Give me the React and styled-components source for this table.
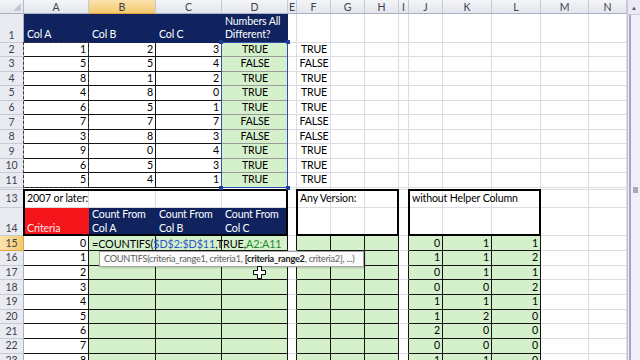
import React from "react";
import styled, { createGlobalStyle } from "styled-components";

const GlobalStyle = createGlobalStyle`
  html, body {
    margin: 0;
    padding: 0;
    background: #ffffff;
  }
  body {
    font-family: Lato, "Liberation Sans", sans-serif;
  }
`;

const GRID = "#dcdde3";
const BLACK = "#141414";
const GRAY = "#9a9a9a";
const NAVY = "#10235f";
const GREEN = "#d4f1cc";
const RED = "#f4151b";

const COLS = ["A", "B", "C", "D", "E", "F", "G", "H", "I", "J", "K", "L", "M", "N"];
const WIDTHS = [65, 67, 66, 66, 9, 34, 34, 34, 10, 34, 49, 49, 48, 38];
const ROW_HEIGHTS = [
  14,
  28.5,
  ...Array(10).fill(14.55),
  2,
  18,
  28.5,
  ...Array(9).fill(14.65),
];

const colA = [1, 5, 8, 4, 6, 7, 3, 9, 6, 5];
const colB = [2, 5, 1, 8, 5, 7, 8, 0, 5, 4];
const colC = [3, 4, 2, 0, 1, 7, 3, 4, 3, 1];
const colD = [true, false, true, true, true, false, false, true, true, true];
const helper = [
  [0, 1, 1],
  [1, 1, 2],
  [0, 1, 1],
  [0, 0, 2],
  [1, 1, 1],
  [1, 2, 0],
  [2, 0, 0],
  [0, 0, 0],
  [1, 1, 0],
];

// what each cell looks like
const cellSpec = (r, c) => {
  const s = { fill: "#fff", rb: GRID, bb: GRID, align: "flex-start", color: "#000", text: "" };

  if (r === 1 && c <= 3) {
    s.fill = NAVY;
    s.rb = NAVY;
    s.bb = NAVY;
    s.color = "#fff";
    s.text = ["Col A", "Col B", "Col C", "Numbers All\nDifferent?"][c];
  }

  if (r >= 2 && r <= 11) {
    const i = r - 2;
    if (c <= 2) {
      s.rb = BLACK;
      s.bb = BLACK;
      s.align = "flex-end";
      s.text = String([colA, colB, colC][c][i]);
    }
    if (c === 3) {
      s.fill = GREEN;
      s.rb = GRAY;
      s.bb = i === 9 ? BLACK : GRAY;
      s.align = "center";
      s.text = colD[i] ? "TRUE" : "FALSE";
    }
    if (c === 5) {
      s.align = "center";
      s.text = colD[i] ? "TRUE" : "FALSE";
    }
  }

  if (r === 13) {
    if (c === 0) s.text = "2007 or later:";
    if (c === 5) s.text = "Any Version:";
    if (c === 9) s.text = "without Helper Column";
    s.top = true;
    s.over = s.text !== "";
  }

  if (r === 14) {
    if (c === 0) {
      s.fill = RED;
      s.rb = RED;
      s.bb = BLACK;
      s.color = "#ffe4e4";
      s.text = "Criteria";
    }
    if (c >= 1 && c <= 3) {
      s.fill = NAVY;
      s.rb = NAVY;
      s.bb = BLACK;
      s.color = "#fff";
      s.text = "Count From\nCol " + COLS[c - 1];
    }
  }

  if (r >= 15) {
    const i = r - 15;
    const green = (c >= 1 && c <= 3) || (c >= 5 && c <= 7) || (c >= 9 && c <= 11);
    if (c === 0) {
      s.rb = BLACK;
      s.bb = BLACK;
      s.align = "flex-end";
      s.text = String(i);
    }
    if (green) {
      s.fill = GREEN;
      s.rb = BLACK;
      s.bb = BLACK;
    }
    if (c === 4 || c === 8) s.rb = BLACK;
    if (c >= 9 && c <= 11) {
      s.align = "flex-end";
      s.text = String(helper[i][c - 9]);
    }
    if (r === 15 && c === 1) s.formula = true;
  }

  return s;
};

const Page = styled.div`
  width: 640px;
  height: 360px;
  overflow: hidden;
  display: flex;
  position: relative;
`;

const Sheet = styled.div`
  display: grid;
  grid-template-columns: 24px ${WIDTHS.map((w) => w + "px").join(" ")};
  grid-template-rows: ${ROW_HEIGHTS.map((h) => h + "px").join(" ")};
  width: 627px;
  height: 360px;
  overflow: hidden;
  flex: none;
  font-size: 11px;
`;

const Corner = styled.div`
  grid-row: 1;
  grid-column: 1;
  box-sizing: border-box;
  background: linear-gradient(#f4f5f8, #e3e6ed);
  border-right: 1px solid #b3b9c7;
  border-bottom: 1px solid #a9b1c1;
  position: relative;

  &::after {
    content: "";
    position: absolute;
    right: 2px;
    bottom: 2px;
    border-left: 8px solid transparent;
    border-bottom: 8px solid #c3c8d3;
  }
`;

const ColHead = styled.div`
  grid-row: 1;
  grid-column: ${(p) => p.$c};
  box-sizing: border-box;
  background: ${(p) =>
    p.$active ? "linear-gradient(#fbe3ae, #f4c96d)" : "linear-gradient(#f4f5f8, #e3e6ed)"};
  border-right: 1px solid #c6cad5;
  border-bottom: 1px solid ${(p) => (p.$active ? "#e0a445" : "#a9b1c1")};
  color: #3d4150;
  display: flex;
  align-items: center;
  justify-content: center;
  overflow: hidden;
  font-size: 10.5px;
`;

const RowHead = styled.div`
  grid-row: ${(p) => p.$r};
  grid-column: 1;
  box-sizing: border-box;
  background: ${(p) => (p.$active ? "linear-gradient(90deg, #fbe3ae, #f4c96d)" : "#e9ebf1")};
  border-right: 1px solid ${(p) => (p.$active ? "#e0a445" : "#a9b1c1")};
  border-bottom: 1px solid ${(p) => (p.$active ? "#e0a445" : "#c6cad5")};
  color: #3d4150;
  display: flex;
  align-items: ${(p) => (p.$tall ? "flex-end" : "center")};
  justify-content: center;
  overflow: hidden;
  font-size: 10.5px;
  line-height: 13px;
`;

const Cell = styled.div`
  grid-row: ${(p) => p.$r};
  grid-column: ${(p) => p.$c};
  box-sizing: border-box;
  min-width: 0;
  min-height: 0;
  background: ${(p) => p.$fill};
  border-right: 1px solid ${(p) => p.$rb};
  border-bottom: 1px solid ${(p) => p.$bb};
  color: ${(p) => p.$color};
  display: flex;
  align-items: ${(p) => (p.$top ? "center" : "flex-end")};
  justify-content: ${(p) => p.$align};
  padding: 0 2px 0 3px;
  font-size: 10.6px;
  letter-spacing: -0.15px;
  line-height: 13.5px;
  white-space: pre;
  overflow: visible;
  z-index: ${(p) => (p.$over ? 2 : 0)};
`;

const Formula = styled.span`
  color: #000;
  font-size: 10.8px;
  letter-spacing: -0.1px;
`;

const Ref = styled.span`
  color: ${(p) => p.$tone};
`;

const Box = styled.div`
  grid-row: ${(p) => p.$r};
  grid-column: ${(p) => p.$c};
  box-sizing: border-box;
  margin: -1px 0 0 -1px;
  border: 2px solid #000;
  pointer-events: none;
  z-index: 4;
`;

const Ants = styled.div`
  grid-row: 3 / 13;
  grid-column: 2;
  box-sizing: border-box;
  margin: -1px 0 0 -1px;
  border: 1.5px dashed #3a3a3a;
  pointer-events: none;
  z-index: 5;
`;

const Range = styled.div`
  grid-row: 3 / 13;
  grid-column: 5;
  box-sizing: border-box;
  margin: -1px 0 0 -1px;
  border: 1px solid #2f4fa8;
  position: relative;
  pointer-events: none;
  z-index: 5;
`;

const Handle = styled.span`
  position: absolute;
  width: 4px;
  height: 4px;
  background: #1f3f9a;
  ${(p) => (p.$right ? "right: -3px;" : "left: -3px;")}
  ${(p) => (p.$bottom ? "bottom: -3px;" : "top: -3px;")}
`;

const Tip = styled.div`
  position: absolute;
  left: 99px;
  top: 251px;
  width: 265px;
  height: 16px;
  box-sizing: border-box;
  background: #fbfbfb;
  border: 1px solid #a5a5a5;
  box-shadow: 1px 1px 2px rgba(0, 0, 0, 0.2);
  color: #5d5d5d;
  font-size: 9.2px;
  letter-spacing: -0.25px;
  line-height: 14px;
  padding-left: 4px;
  white-space: nowrap;
  overflow: hidden;
  z-index: 10;
`;

const TipBold = styled.b`
  color: #222;
`;

const Cursor = styled.svg`
  position: absolute;
  left: 253px;
  top: 266px;
  z-index: 11;
`;

const ScrollBar = styled.div`
  width: 13px;
  flex: none;
  display: flex;
  flex-direction: column;
  background: #ebeaf4;
  border-left: 1px solid #c3c5d6;
  box-sizing: border-box;
`;

const UpButton = styled.div`
  height: 14px;
  display: flex;
  align-items: center;
  justify-content: center;
  border-bottom: 1px solid #c9c9da;
  color: #50505f;
  font-size: 6px;
`;

const Track = styled.div`
  flex: 1;
  margin-left: 1px;
  border-left: 2px solid #a7a6c3;
  background: #f0eff8;
  display: flex;
  justify-content: center;
`;

const Grip = styled.div`
  width: 5px;
  height: 6px;
  margin-top: 172px;
  background: #a8a8b8;
`;

export default function App() {
  const rows = [];
  for (let r = 1; r <= 23; r++) rows.push(r);

  return (
    <>
      <GlobalStyle />
      <Page>
        <Sheet>
          <Corner />
          {COLS.map((c, i) => (
            <ColHead key={c} $c={i + 2} $active={c === "B"}>
              {c}
            </ColHead>
          ))}

          {rows.map((r) => (
            <RowHead key={"h" + r} $r={r + 1} $active={r === 15} $tall={r === 1 || r === 14}>
              {r === 12 ? "" : r}
            </RowHead>
          ))}

          {rows.map((r) =>
            COLS.map((col, c) => {
              const s = cellSpec(r, c);
              return (
                <Cell
                  key={col + r}
                  $r={r + 1}
                  $c={c + 2}
                  $fill={s.fill}
                  $rb={s.rb}
                  $bb={s.bb}
                  $color={s.color}
                  $align={s.align}
                  $top={s.top}
                  $over={s.over || s.formula}
                >
                  {s.formula ? (
                    <Formula>
                      =COUNTIFS(<Ref $tone="#2f55c4">$D$2:$D$11</Ref>,TRUE,
                      <Ref $tone="#1c8a2c">A2:A11</Ref>
                    </Formula>
                  ) : (
                    s.text
                  )}
                </Cell>
              );
            })
          )}

          <Ants />
          <Range>
            <Handle />
            <Handle $right />
            <Handle $bottom />
            <Handle $right $bottom />
          </Range>
          <Box $r="14 / 16" $c="2 / 6" />
          <Box $r="14 / 16" $c="7 / 10" />
          <Box $r="14 / 16" $c="11 / 14" />
        </Sheet>

        <ScrollBar>
          <UpButton>▲</UpButton>
          <Track>
            <Grip />
          </Track>
        </ScrollBar>

        <Tip>
          COUNTIFS(criteria_range1, criteria1, <TipBold>[criteria_range2</TipBold>, criteria2], ...)
        </Tip>
        <Cursor width="13" height="13" viewBox="0 0 13 13">
          <path
            d="M4.5 0.5 H8.5 V4.5 H12.5 V8.5 H8.5 V12.5 H4.5 V8.5 H0.5 V4.5 H4.5 Z"
            fill="#fff"
            stroke="#000"
            strokeWidth="1"
          />
        </Cursor>
      </Page>
    </>
  );
}
